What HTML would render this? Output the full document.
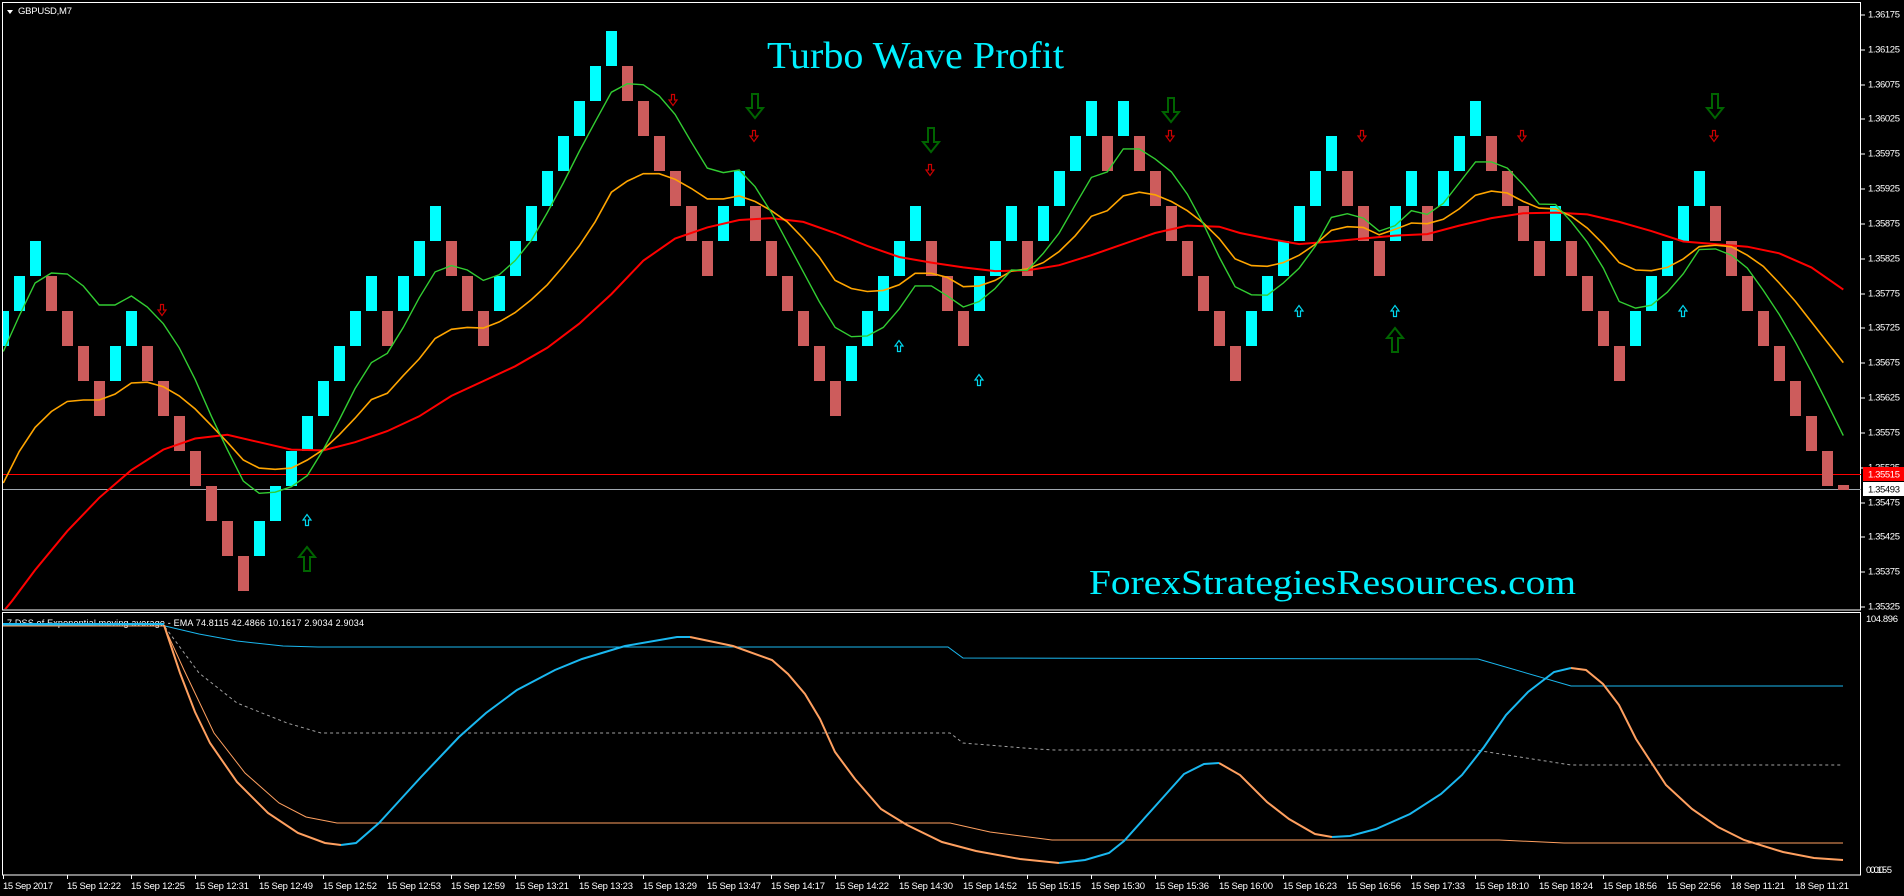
<!DOCTYPE html>
<html><head><meta charset="utf-8"><style>
html,body{margin:0;padding:0;background:#000;width:1904px;height:896px;overflow:hidden}
svg{display:block}
.ax{font-family:"Liberation Sans",sans-serif;font-size:9.5px;fill:#fff}
</style></head><body>
<svg width="1904" height="896" viewBox="0 0 1904 896" xmlns="http://www.w3.org/2000/svg">
<defs>
<clipPath id="mc"><rect x="3" y="3" width="1858" height="606"/></clipPath>
<path id="sd" d="M-1.5,-5.5H1.5V0H4L0,5.5L-4,0H-1.5Z"/>
<path id="bd" d="M-3,-12H3V2H8L0,12L-8,2H-3Z"/>
</defs>
<rect width="1904" height="896" fill="#000"/>
<!-- frames -->
<rect x="2.5" y="2.5" width="1858" height="607.5" fill="none" stroke="#fff" stroke-width="1"/>
<rect x="2.5" y="612.5" width="1858" height="262.5" fill="none" stroke="#fff" stroke-width="1"/>

<g clip-path="url(#mc)">
<!-- horizontal level lines -->
<line x1="3" y1="474.5" x2="1861" y2="474.5" stroke="#ff0000" stroke-width="1"/>
<line x1="3" y1="489.5" x2="1861" y2="489.5" stroke="#a0a8b0" stroke-width="1"/>

<!-- bricks -->
<g fill="#00ffff">
<rect x="-2" y="311" width="11" height="35"/><rect x="14" y="276" width="11" height="35"/><rect x="30" y="241" width="11" height="35"/>
<rect x="110" y="346" width="11" height="35"/><rect x="126" y="311" width="11" height="35"/>
<rect x="254" y="521" width="11" height="35"/><rect x="270" y="486" width="11" height="35"/><rect x="286" y="451" width="11" height="35"/><rect x="302" y="416" width="11" height="35"/><rect x="318" y="381" width="11" height="35"/><rect x="334" y="346" width="11" height="35"/><rect x="350" y="311" width="11" height="35"/><rect x="366" y="276" width="11" height="35"/>
<rect x="398" y="276" width="11" height="35"/><rect x="414" y="241" width="11" height="35"/><rect x="430" y="206" width="11" height="35"/>
<rect x="494" y="276" width="11" height="35"/><rect x="510" y="241" width="11" height="35"/><rect x="526" y="206" width="11" height="35"/><rect x="542" y="171" width="11" height="35"/><rect x="558" y="136" width="11" height="35"/><rect x="574" y="101" width="11" height="35"/><rect x="590" y="66" width="11" height="35"/><rect x="606" y="31" width="11" height="35"/>
<rect x="718" y="206" width="11" height="35"/><rect x="734" y="171" width="11" height="35"/>
<rect x="846" y="346" width="11" height="35"/><rect x="862" y="311" width="11" height="35"/><rect x="878" y="276" width="11" height="35"/><rect x="894" y="241" width="11" height="35"/><rect x="910" y="206" width="11" height="35"/>
<rect x="974" y="276" width="11" height="35"/><rect x="990" y="241" width="11" height="35"/><rect x="1006" y="206" width="11" height="35"/>
<rect x="1038" y="206" width="11" height="35"/><rect x="1054" y="171" width="11" height="35"/><rect x="1070" y="136" width="11" height="35"/><rect x="1086" y="101" width="11" height="35"/>
<rect x="1118" y="101" width="11" height="35"/>
<rect x="1246" y="311" width="11" height="35"/><rect x="1262" y="276" width="11" height="35"/><rect x="1278" y="241" width="11" height="35"/><rect x="1294" y="206" width="11" height="35"/><rect x="1310" y="171" width="11" height="35"/><rect x="1326" y="136" width="11" height="35"/>
<rect x="1390" y="206" width="11" height="35"/><rect x="1406" y="171" width="11" height="35"/>
<rect x="1438" y="171" width="11" height="35"/><rect x="1454" y="136" width="11" height="35"/><rect x="1470" y="101" width="11" height="35"/>
<rect x="1550" y="206" width="11" height="35"/>
<rect x="1630" y="311" width="11" height="35"/><rect x="1646" y="276" width="11" height="35"/><rect x="1662" y="241" width="11" height="35"/><rect x="1678" y="206" width="11" height="35"/><rect x="1694" y="171" width="11" height="35"/>
</g>
<g fill="#cd5c5c">
<rect x="46" y="276" width="11" height="35"/><rect x="62" y="311" width="11" height="35"/><rect x="78" y="346" width="11" height="35"/><rect x="94" y="381" width="11" height="35"/>
<rect x="142" y="346" width="11" height="35"/><rect x="158" y="381" width="11" height="35"/><rect x="174" y="416" width="11" height="35"/><rect x="190" y="451" width="11" height="35"/><rect x="206" y="486" width="11" height="35"/><rect x="222" y="521" width="11" height="35"/><rect x="238" y="556" width="11" height="35"/>
<rect x="382" y="311" width="11" height="35"/>
<rect x="446" y="241" width="11" height="35"/><rect x="462" y="276" width="11" height="35"/><rect x="478" y="311" width="11" height="35"/>
<rect x="622" y="66" width="11" height="35"/><rect x="638" y="101" width="11" height="35"/><rect x="654" y="136" width="11" height="35"/><rect x="670" y="171" width="11" height="35"/><rect x="686" y="206" width="11" height="35"/><rect x="702" y="241" width="11" height="35"/>
<rect x="750" y="206" width="11" height="35"/><rect x="766" y="241" width="11" height="35"/><rect x="782" y="276" width="11" height="35"/><rect x="798" y="311" width="11" height="35"/><rect x="814" y="346" width="11" height="35"/><rect x="830" y="381" width="11" height="35"/>
<rect x="926" y="241" width="11" height="35"/><rect x="942" y="276" width="11" height="35"/><rect x="958" y="311" width="11" height="35"/>
<rect x="1022" y="241" width="11" height="35"/>
<rect x="1102" y="136" width="11" height="35"/>
<rect x="1134" y="136" width="11" height="35"/><rect x="1150" y="171" width="11" height="35"/><rect x="1166" y="206" width="11" height="35"/><rect x="1182" y="241" width="11" height="35"/><rect x="1198" y="276" width="11" height="35"/><rect x="1214" y="311" width="11" height="35"/><rect x="1230" y="346" width="11" height="35"/>
<rect x="1342" y="171" width="11" height="35"/><rect x="1358" y="206" width="11" height="35"/><rect x="1374" y="241" width="11" height="35"/>
<rect x="1422" y="206" width="11" height="35"/>
<rect x="1486" y="136" width="11" height="35"/><rect x="1502" y="171" width="11" height="35"/><rect x="1518" y="206" width="11" height="35"/><rect x="1534" y="241" width="11" height="35"/>
<rect x="1566" y="241" width="11" height="35"/><rect x="1582" y="276" width="11" height="35"/><rect x="1598" y="311" width="11" height="35"/><rect x="1614" y="346" width="11" height="35"/>
<rect x="1710" y="206" width="11" height="35"/><rect x="1726" y="241" width="11" height="35"/><rect x="1742" y="276" width="11" height="35"/><rect x="1758" y="311" width="11" height="35"/><rect x="1774" y="346" width="11" height="35"/><rect x="1790" y="381" width="11" height="35"/><rect x="1806" y="416" width="11" height="35"/><rect x="1822" y="451" width="11" height="35"/>
<rect x="1838" y="485" width="11" height="5"/>
</g>

<!-- red MA -->
<polyline fill="none" stroke="#ff0000" stroke-width="2" points="3,612 12.2,600.7 35.1,570 67.3,531.1 99.2,497.8 131.4,470 163.3,449.6 195.1,438.5 227.3,434.8 259.2,442.2 291.4,449.6 323.3,450.4 355.1,442.2 387.3,431.1 419.2,416.3 451.4,395.9 483.3,381.1 515.1,366.3 547.3,347.8 579.2,323.7 611.4,294.1 643.3,260.7 675.1,238.5 707.3,227.4 739.2,220 771.4,218.1 803.3,221.9 835.1,233 867.3,245.9 899.2,257 931.4,262.6 963.3,267.4 995.1,271.1 1027.3,270.4 1059.2,265.2 1091.4,255.2 1123.3,244.1 1155.1,233 1187.3,225.6 1219.2,226.7 1240,233 1267.3,238.5 1299.2,244.1 1331.4,241.5 1363.3,238.5 1395.1,235.6 1427.3,234.1 1459.2,225.6 1491.4,218.1 1523.3,213.3 1555.5,212.6 1587.3,214.4 1619.2,221.9 1651.4,231.1 1683.3,241.5 1715.5,244.1 1747.3,246.7 1779.2,253.3 1811.4,267.4 1843.3,289.6"/>
<!-- orange MA -->
<polyline fill="none" stroke="#ffa500" stroke-width="1.6" points="3.3,483 19.2,451.5 35.1,427.4 51.4,411.5 67.3,401.5 83.3,400 99.2,400 115,394.1 131.4,383 147.3,382.2 163.3,386.7 179.2,395.9 195.1,408.9 211.4,425.6 227.3,442.2 243.3,460 259.2,468.1 275.1,469.3 291.4,468.1 307.3,460 323.3,449.6 339.2,434.8 355.1,418.1 371.4,399.6 387.3,393.3 403.3,375.6 419.2,358.9 435.1,338.5 451.4,329.3 467.3,327.4 483.3,328.1 499.2,321.9 515.1,312.6 531.4,299.6 547.3,284.8 563.3,266.3 579.2,245.9 595.1,221.9 611.4,192.2 627.3,181.1 643.3,173.7 659.2,173.7 675.1,179.3 691.4,188.5 707.3,198.9 723.3,198.9 739.2,195.9 755.1,201.5 771.4,210.7 787.3,221.9 803.3,238.5 819.2,257 835.1,280.4 851.4,288.5 867.3,291.5 883.3,290.4 899.2,284.8 915.1,273.3 931.4,273.3 947.3,277.4 963.3,286.7 979.2,285.9 995.1,280.4 1011.4,271.1 1027.3,268.9 1043.3,262.6 1059.2,251.5 1075.1,235.9 1091.4,216.3 1107.3,210.7 1123.3,195.9 1139.2,192.2 1155.1,194.8 1171.4,201.5 1187.3,210.7 1203.3,223 1219.2,238.5 1235.1,258.9 1251.4,265.6 1267.3,266.3 1283.3,262.6 1299.2,255.2 1315.5,244.1 1331.4,230.4 1347.3,226.7 1363.3,227.4 1379.2,234.8 1395.1,229.3 1411.4,223 1427.3,223.7 1443.3,219.3 1459.2,208.9 1475.5,195.2 1491.4,191.1 1507.3,193 1523.3,201.5 1539.2,208.1 1555.5,208.9 1571.4,216.3 1587.3,228.1 1603.3,244.1 1619.2,262.6 1635.5,270 1651.4,270.7 1667.3,267.4 1683.3,258.9 1699.2,246.7 1715.5,245.2 1731.4,246.7 1747.3,255.2 1763.3,266.3 1779.2,283 1795.5,301.5 1811.4,321.9 1827.3,342.2 1843.3,362.6"/>
<!-- green MA -->
<polyline fill="none" stroke="#32cd32" stroke-width="1.4" points="3.3,351.5 19.2,316 35.1,283 51.4,273 67.3,274 83.3,286 99.2,305 115,305 131.4,296 147.3,307 163.3,323.7 179.2,347.8 195.1,379.3 211.4,416.3 227.3,449.6 243.3,481.1 259.2,493.3 275.1,492.2 291.4,486.7 307.3,475.6 323.3,449.6 339.2,420 355.1,388.5 371.4,362.6 387.3,353.3 403.3,327.4 419.2,297.8 435.1,271.9 451.4,265.6 467.3,270 483.3,280.4 499.2,274.8 515.1,260.7 531.4,240.4 547.3,212.6 563.3,183 579.2,151.5 595.1,121.9 611.4,92.2 627.3,83.7 643.3,84.8 659.2,95.9 675.1,114.4 691.4,142.2 707.3,168.1 723.3,172.6 739.2,170 755.1,186.7 771.4,212.6 787.3,242.2 803.3,271.9 819.2,301.5 835.1,327.4 851.4,336.7 867.3,335.9 883.3,327.4 899.2,308.9 915.1,285.9 931.4,285.9 947.3,295.9 963.3,307 979.2,301.5 995.1,288.5 1011.4,270 1027.3,270.4 1043.3,253.3 1059.2,233 1075.1,205.2 1091.4,177.4 1107.3,171.9 1123.3,148.9 1139.2,148.9 1155.1,158.9 1171.4,171.9 1187.3,194.1 1203.3,223.7 1219.2,257 1235.1,286.7 1251.4,294.8 1267.3,295.2 1283.3,283 1299.2,268.1 1315.5,245.9 1331.4,217.4 1347.3,213.7 1363.3,218.1 1379.2,231.1 1395.1,225.6 1411.4,210.7 1427.3,214.4 1443.3,203.3 1459.2,183 1475.5,161.9 1491.4,161.9 1507.3,168.1 1523.3,184.8 1539.2,204.1 1555.5,204.4 1571.4,221.9 1587.3,242.2 1603.3,268.1 1619.2,301.5 1635.5,308.1 1651.4,305.2 1667.3,292.2 1683.3,273.7 1699.2,249.6 1715.5,248.9 1731.4,255.2 1747.3,268.1 1763.3,290.4 1779.2,314.4 1795.5,342.2 1811.4,371.9 1827.3,403.3 1843.3,435.6"/>

<!-- arrows -->
<g fill="none" stroke="#cc0000" stroke-width="1.2">
<use href="#sd" x="162" y="310"/><use href="#sd" x="673" y="100"/><use href="#sd" x="754" y="136"/><use href="#sd" x="930" y="170"/><use href="#sd" x="1170" y="136"/><use href="#sd" x="1362" y="136"/><use href="#sd" x="1522" y="136"/><use href="#sd" x="1714" y="136"/>
</g>
<g fill="none" stroke="#00d8f0" stroke-width="1.2">
<use href="#sd" transform="translate(307,520) rotate(180)"/><use href="#sd" transform="translate(899,346) rotate(180)"/><use href="#sd" transform="translate(979,380) rotate(180)"/><use href="#sd" transform="translate(1299,311) rotate(180)"/><use href="#sd" transform="translate(1395,311) rotate(180)"/><use href="#sd" transform="translate(1683,311) rotate(180)"/>
</g>
<g fill="none" stroke="#006400" stroke-width="2">
<use href="#bd" x="755" y="106"/><use href="#bd" x="931" y="140"/><use href="#bd" x="1171" y="110"/><use href="#bd" x="1715" y="106"/>
<use href="#bd" transform="translate(307,559) rotate(180)"/><use href="#bd" transform="translate(1395,340) rotate(180)"/>
</g>
</g>

<!-- header -->
<path d="M7,10 L13,10 L10,14 Z" fill="#fff"/>
<text x="18" y="14" class="ax" textLength="54">GBPUSD,M7</text>

<!-- titles -->
<text x="767" y="68" font-family="'Liberation Serif',serif" font-size="38" fill="#00f0ff" textLength="297" lengthAdjust="spacingAndGlyphs">Turbo Wave Profit</text>
<text x="1089" y="594" font-family="'Liberation Serif',serif" font-size="35" fill="#00f0ff" textLength="487" lengthAdjust="spacingAndGlyphs">ForexStrategiesResources.com</text>

<!-- price axis -->
<g stroke="#fff" stroke-width="1">
<line x1="1861" y1="15" x2="1865" y2="15"/><line x1="1861" y1="50" x2="1865" y2="50"/><line x1="1861" y1="85" x2="1865" y2="85"/><line x1="1861" y1="119" x2="1865" y2="119"/><line x1="1861" y1="154" x2="1865" y2="154"/><line x1="1861" y1="189" x2="1865" y2="189"/><line x1="1861" y1="224" x2="1865" y2="224"/><line x1="1861" y1="259" x2="1865" y2="259"/><line x1="1861" y1="294" x2="1865" y2="294"/><line x1="1861" y1="328" x2="1865" y2="328"/><line x1="1861" y1="363" x2="1865" y2="363"/><line x1="1861" y1="398" x2="1865" y2="398"/><line x1="1861" y1="433" x2="1865" y2="433"/><line x1="1861" y1="468" x2="1865" y2="468"/><line x1="1861" y1="503" x2="1865" y2="503"/><line x1="1861" y1="537" x2="1865" y2="537"/><line x1="1861" y1="572" x2="1865" y2="572"/><line x1="1861" y1="607" x2="1865" y2="607"/>
</g>
<g class="ax" dominant-baseline="middle">
<text x="1868" y="15" textLength="32">1.36175</text><text x="1868" y="50" textLength="32">1.36125</text><text x="1868" y="85" textLength="32">1.36075</text><text x="1868" y="119" textLength="32">1.36025</text><text x="1868" y="154" textLength="32">1.35975</text><text x="1868" y="189" textLength="32">1.35925</text><text x="1868" y="224" textLength="32">1.35875</text><text x="1868" y="259" textLength="32">1.35825</text><text x="1868" y="294" textLength="32">1.35775</text><text x="1868" y="328" textLength="32">1.35725</text><text x="1868" y="363" textLength="32">1.35675</text><text x="1868" y="398" textLength="32">1.35625</text><text x="1868" y="433" textLength="32">1.35575</text><text x="1868" y="468" textLength="32">1.35525</text><text x="1868" y="503" textLength="32">1.35475</text><text x="1868" y="537" textLength="32">1.35425</text><text x="1868" y="572" textLength="32">1.35375</text><text x="1868" y="607" textLength="32">1.35325</text>
</g>
<rect x="1863" y="467" width="41" height="14" fill="#ff0000"/>
<text x="1868" y="475" class="ax" dominant-baseline="middle" textLength="32">1.35515</text>
<rect x="1863" y="482" width="41" height="14" fill="#fff"/>
<text x="1868" y="490" class="ax" style="fill:#000" dominant-baseline="middle" textLength="32">1.35493</text>

<!-- sub window -->
<text x="7" y="626" font-family="'Liberation Sans',sans-serif" font-size="9" fill="#fff" textLength="357">7 DSS of Exponential moving average - EMA 74.8115 42.4866 10.1617 2.9034 2.9034</text>
<text x="1866" y="622" class="ax" textLength="32">104.896</text>
<text x="1866" y="873" class="ax" textLength="18">0.00</text>
<text x="1870" y="873" class="ax" textLength="22">0.155</text>

<!-- blue upper -->
<polyline fill="none" stroke="#1ab8f0" stroke-width="1" points="3,625 165,626 199,634 237,641 283,646 318,647 948,647 963,658 1478,659 1571,686 1843,686"/>
<!-- gray dashed -->
<polyline fill="none" stroke="#a0a0a0" stroke-width="1" stroke-dasharray="3,3" points="165,627 199,673 237,703 287,723 321,733 950,733 963,743 1037,749 1054,750 1475,750 1571,765 1843,765"/>
<!-- thin orange -->
<polyline fill="none" stroke="#ffa060" stroke-width="1" points="3,626 164,626 184,670 214,733 245,773 279,803 306,817 337,823 950,823 990,832 1052,840 1499,840 1564,843 1843,843"/>
<!-- thick line orange parts -->
<polyline fill="none" stroke="#ffa060" stroke-width="2" points="164,625 180,673 195,712 210,743 237,782 268,813 298,833 325,843 341,845"/>
<polyline fill="none" stroke="#ffa060" stroke-width="2" points="690,637 733,646 772,660 788,674 805,694 820,719 835,752 855,779 881,809 907,825 942,842 976,851 1020,859 1059,863"/>
<polyline fill="none" stroke="#ffa060" stroke-width="2" points="1219,763 1240,775 1267,802 1289,819 1315,834 1332,837"/>
<polyline fill="none" stroke="#ffa060" stroke-width="2" points="1571,668 1586,670 1603,684 1619,705 1636,739 1666,785 1692,809 1718,827 1744,840 1783,852 1814,858 1843,860"/>
<!-- thick line blue parts -->
<polyline fill="none" stroke="#1ab8f0" stroke-width="2" points="3,624 164,624"/>
<polyline fill="none" stroke="#1ab8f0" stroke-width="2" points="341,845 356,843 379,823 421,777 459,737 486,713 517,690 555,670 582,659 625,646 677,637 690,637"/>
<polyline fill="none" stroke="#1ab8f0" stroke-width="2" points="1059,863 1085,860 1109,853 1124,841 1150,812 1184,774 1204,764 1219,763"/>
<polyline fill="none" stroke="#1ab8f0" stroke-width="2" points="1332,837 1350,836 1376,829 1410,814 1441,794 1462,775 1484,747 1506,715 1528,692 1554,672 1571,668"/>

<!-- time axis -->
<g stroke="#fff" stroke-width="1">
<line x1="3.5" y1="875" x2="3.5" y2="879"/><line x1="67.5" y1="875" x2="67.5" y2="879"/><line x1="131.5" y1="875" x2="131.5" y2="879"/><line x1="195.5" y1="875" x2="195.5" y2="879"/><line x1="259.5" y1="875" x2="259.5" y2="879"/><line x1="323.5" y1="875" x2="323.5" y2="879"/><line x1="387.5" y1="875" x2="387.5" y2="879"/><line x1="451.5" y1="875" x2="451.5" y2="879"/><line x1="515.5" y1="875" x2="515.5" y2="879"/><line x1="579.5" y1="875" x2="579.5" y2="879"/><line x1="643.5" y1="875" x2="643.5" y2="879"/><line x1="707.5" y1="875" x2="707.5" y2="879"/><line x1="771.5" y1="875" x2="771.5" y2="879"/><line x1="835.5" y1="875" x2="835.5" y2="879"/><line x1="899.5" y1="875" x2="899.5" y2="879"/><line x1="963.5" y1="875" x2="963.5" y2="879"/><line x1="1027.5" y1="875" x2="1027.5" y2="879"/><line x1="1091.5" y1="875" x2="1091.5" y2="879"/><line x1="1155.5" y1="875" x2="1155.5" y2="879"/><line x1="1219.5" y1="875" x2="1219.5" y2="879"/><line x1="1283.5" y1="875" x2="1283.5" y2="879"/><line x1="1347.5" y1="875" x2="1347.5" y2="879"/><line x1="1411.5" y1="875" x2="1411.5" y2="879"/><line x1="1475.5" y1="875" x2="1475.5" y2="879"/><line x1="1539.5" y1="875" x2="1539.5" y2="879"/><line x1="1603.5" y1="875" x2="1603.5" y2="879"/><line x1="1667.5" y1="875" x2="1667.5" y2="879"/><line x1="1731.5" y1="875" x2="1731.5" y2="879"/><line x1="1795.5" y1="875" x2="1795.5" y2="879"/>
</g>
<g class="ax">
<text x="3" y="889" textLength="50">15 Sep 2017</text>
<text x="67" y="889" textLength="54">15 Sep 12:22</text><text x="131" y="889" textLength="54">15 Sep 12:25</text><text x="195" y="889" textLength="54">15 Sep 12:31</text><text x="259" y="889" textLength="54">15 Sep 12:49</text><text x="323" y="889" textLength="54">15 Sep 12:52</text><text x="387" y="889" textLength="54">15 Sep 12:53</text><text x="451" y="889" textLength="54">15 Sep 12:59</text><text x="515" y="889" textLength="54">15 Sep 13:21</text><text x="579" y="889" textLength="54">15 Sep 13:23</text><text x="643" y="889" textLength="54">15 Sep 13:29</text><text x="707" y="889" textLength="54">15 Sep 13:47</text><text x="771" y="889" textLength="54">15 Sep 14:17</text><text x="835" y="889" textLength="54">15 Sep 14:22</text><text x="899" y="889" textLength="54">15 Sep 14:30</text><text x="963" y="889" textLength="54">15 Sep 14:52</text><text x="1027" y="889" textLength="54">15 Sep 15:15</text><text x="1091" y="889" textLength="54">15 Sep 15:30</text><text x="1155" y="889" textLength="54">15 Sep 15:36</text><text x="1219" y="889" textLength="54">15 Sep 16:00</text><text x="1283" y="889" textLength="54">15 Sep 16:23</text><text x="1347" y="889" textLength="54">15 Sep 16:56</text><text x="1411" y="889" textLength="54">15 Sep 17:33</text><text x="1475" y="889" textLength="54">15 Sep 18:10</text><text x="1539" y="889" textLength="54">15 Sep 18:24</text><text x="1603" y="889" textLength="54">15 Sep 18:56</text><text x="1667" y="889" textLength="54">15 Sep 22:56</text><text x="1731" y="889" textLength="54">18 Sep 11:21</text><text x="1795" y="889" textLength="54">18 Sep 11:21</text>
</g>
</svg>
</body></html>
